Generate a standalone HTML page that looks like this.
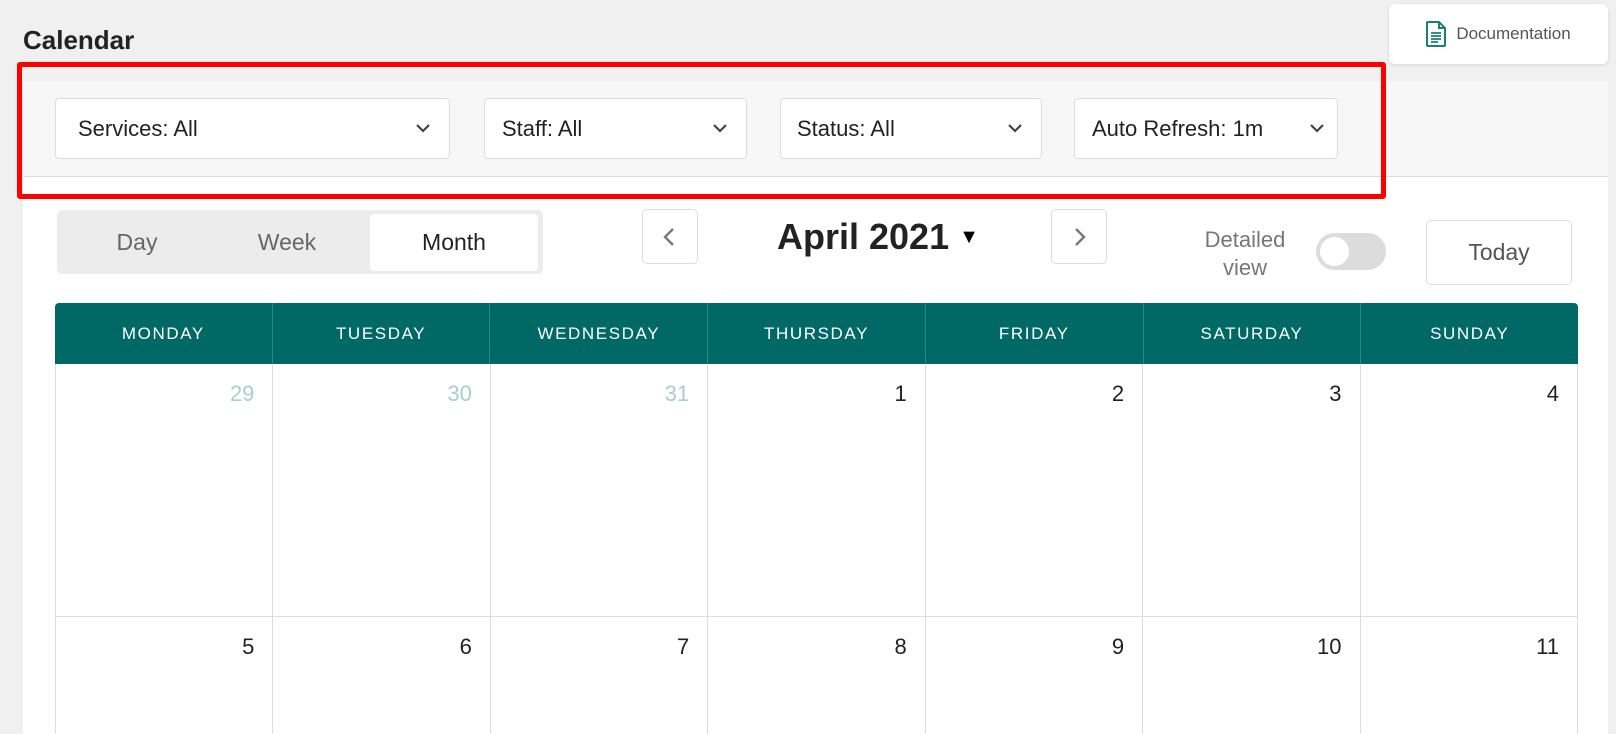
<!DOCTYPE html>
<html><head><meta charset="utf-8"><style>
*{box-sizing:border-box;margin:0;padding:0}
html{height:734px;overflow:hidden}
body{width:1616px;height:734px;background:#f0f0f0;font-family:"Liberation Sans",Arial,sans-serif;position:relative;overflow:hidden;color:#222}
.abs{position:absolute}
h1{position:absolute;left:23px;top:25px;font-size:26px;font-weight:bold;color:#222}
.doc{left:1389px;top:4px;width:219px;height:60px;background:#fff;border-radius:6px;box-shadow:0 1px 3px rgba(0,0,0,.12);display:flex;align-items:center;justify-content:center;font-size:17px;color:#555;gap:10px}
.panel{left:23px;top:81px;width:1585px;height:653px;background:#fff}
.filt{left:23px;top:81px;width:1585px;height:96px;background:#f7f7f7;border-bottom:1px solid #ddd}
.sel{height:61px;top:98px;background:#fff;border:1px solid #ddd;border-radius:4px;font-size:22px;display:flex;align-items:center;padding-left:22px;color:#222}
.sel svg{position:absolute;right:18px;top:24px}
.red{left:17px;top:62px;width:1369px;height:137px;border:5px solid #f00;border-radius:3px}
.tabs{left:57px;top:210px;width:486px;height:64px;background:#ececec;border-radius:5px}
.tab{position:absolute;top:0;height:64px;line-height:64px;font-size:23px;color:#666;text-align:center}
.nav{width:56px;height:55px;top:209px;border:1px solid #ddd;border-radius:5px;background:#fff}
.grid{left:55px;top:303px;width:1523px;height:431px;overflow:hidden}
.hd{display:flex;background:#006966;height:61px;border-radius:4px 4px 0 0}
.hd div{flex:1;color:#fff;font-size:17px;letter-spacing:1.6px;text-align:center;line-height:61px;border-left:1px solid #2b8582}
.hd div:first-child{border-left:none}
.row{display:flex;height:253px;border-bottom:1px solid #ddd}
.row div{flex:1;border-left:1px solid #ddd;text-align:right;padding:17px 18px 0 0;font-size:22px;color:#222}
.row div:last-child{border-right:1px solid #ddd}
.row .o{color:#a9cfc6}
</style></head><body>
<h1>Calendar</h1>
<div class="abs doc"><svg width="20" height="26" viewBox="0 0 20 26"><path d="M2 1h11l6 6v17a1 1 0 0 1-1 1H2a1 1 0 0 1-1-1V2a1 1 0 0 1 1-1z" fill="none" stroke="#1b7f73" stroke-width="2"/><path d="M13 1v6h6" fill="none" stroke="#1b7f73" stroke-width="2"/><path d="M5 12h10M5 15h10M5 18h10M5 21h7" stroke="#1b7f73" stroke-width="1.8"/></svg>Documentation</div>
<div class="abs panel"></div>
<div class="abs filt"></div>
<div class="abs sel" style="left:55px;width:395px">Services: All<svg width="16" height="10" viewBox="0 0 16 10"><path d="M2 2l6 6 6-6" fill="none" stroke="#444" stroke-width="2.2"/></svg></div>
<div class="abs sel" style="left:484px;width:263px;padding-left:17px">Staff: All<svg width="16" height="10" viewBox="0 0 16 10"><path d="M2 2l6 6 6-6" fill="none" stroke="#444" stroke-width="2.2"/></svg></div>
<div class="abs sel" style="left:780px;width:262px;padding-left:16px">Status: All<svg width="16" height="10" viewBox="0 0 16 10"><path d="M2 2l6 6 6-6" fill="none" stroke="#444" stroke-width="2.2"/></svg></div>
<div class="abs sel" style="left:1074px;width:264px;padding-left:17px">Auto Refresh: 1m<svg width="16" height="10" viewBox="0 0 16 10" style="right:12px"><path d="M2 2l6 6 6-6" fill="none" stroke="#444" stroke-width="2.2"/></svg></div>
<div class="abs red"></div>
<div class="abs tabs">
<div class="tab" style="left:0;width:160px">Day</div>
<div class="tab" style="left:150px;width:160px">Week</div>
<div class="tab" style="left:313px;top:4px;width:168px;height:57px;line-height:57px;background:#fff;border-radius:4px;color:#222">Month</div>
</div>
<div class="abs nav" style="left:642px"><svg class="abs" style="left:19px;top:17px" width="14" height="20" viewBox="0 0 14 20"><path d="M11 2L3 10l8 8" fill="none" stroke="#777" stroke-width="2.4"/></svg></div>
<div class="abs" style="left:777px;top:216px;font-size:36px;font-weight:bold;color:#222">April 2021 <span style="font-size:20px;vertical-align:6px;color:#000">▼</span></div>
<div class="abs nav" style="left:1051px"><svg class="abs" style="left:21px;top:17px" width="14" height="20" viewBox="0 0 14 20"><path d="M3 2l8 8-8 8" fill="none" stroke="#777" stroke-width="2.4"/></svg></div>
<div class="abs" style="left:1190px;top:226px;width:110px;text-align:center;font-size:22px;line-height:28px;color:#777">Detailed<br>view</div>
<div class="abs" style="left:1316px;top:233px;width:70px;height:37px;border-radius:19px;background:#dcdcdc"><div class="abs" style="left:4px;top:4px;width:29px;height:29px;border-radius:50%;background:#fff"></div></div>
<div class="abs" style="left:1426px;top:220px;width:146px;height:65px;border:1px solid #ddd;border-radius:5px;background:#fff;text-align:center;line-height:63px;font-size:23px;color:#555">Today</div>
<div class="abs grid">
<div class="hd"><div>MONDAY</div><div>TUESDAY</div><div>WEDNESDAY</div><div>THURSDAY</div><div>FRIDAY</div><div>SATURDAY</div><div>SUNDAY</div></div>
<div class="row"><div class="o">29</div><div class="o">30</div><div class="o">31</div><div>1</div><div>2</div><div>3</div><div>4</div></div>
<div class="row"><div>5</div><div>6</div><div>7</div><div>8</div><div>9</div><div>10</div><div>11</div></div>
</div>
</body></html>
